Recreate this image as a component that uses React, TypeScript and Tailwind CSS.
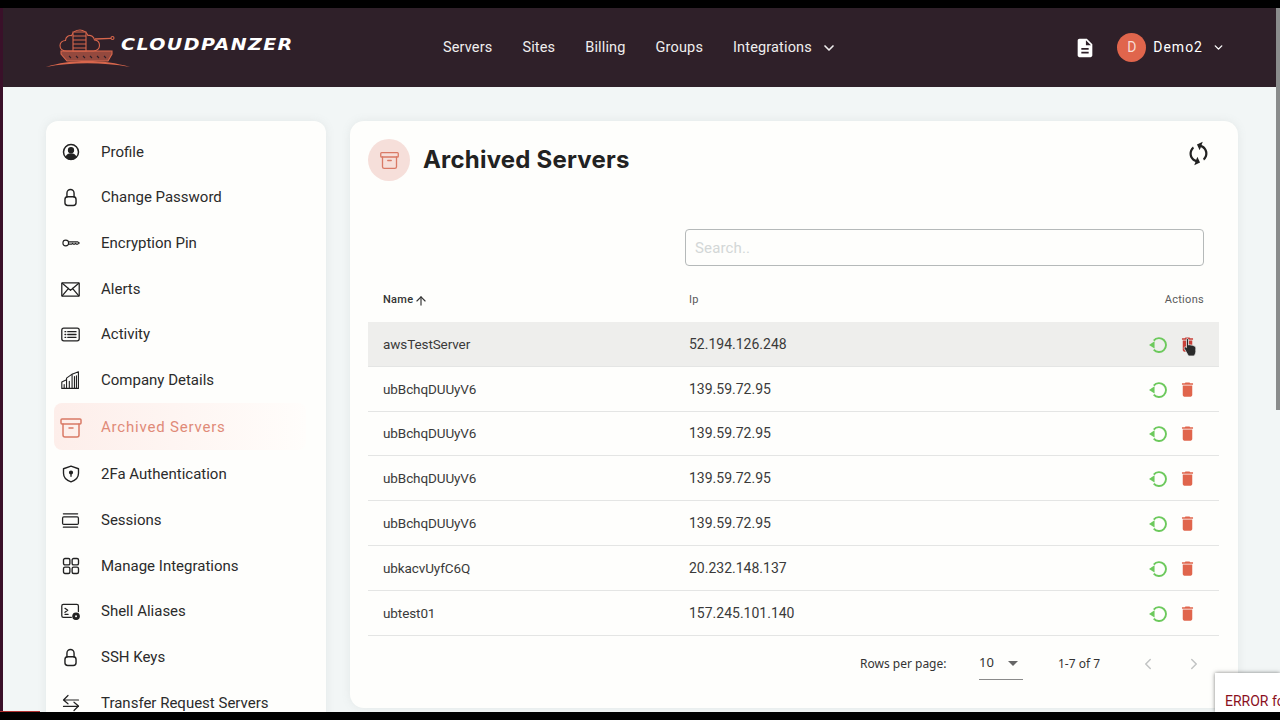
import React from "react";
import { Archive, ArrowUp, ChevronDown, ChevronLeft, ChevronRight } from "lucide-react";
import { MdDescription, MdSync } from "react-icons/md";

type IconProps = { className?: string };

const svgBase = {
  viewBox: "0 0 24 24",
  fill: "none",
  stroke: "currentColor",
  strokeWidth: 1.6,
  strokeLinecap: "round" as const,
  strokeLinejoin: "round" as const,
};

const ProfileIcon = ({ className }: IconProps) => (
  <svg {...svgBase} strokeWidth={2} className={className}>
    <circle cx="12" cy="12" r="10" />
    <circle cx="12" cy="9.5" r="3.2" fill="currentColor" />
    <path d="M5.5 18.500c1.500-3 4-4 6.500-4s5 1 6.500 4c-1.800 2-4 3-6.500 3s-4.700-1-6.500-3z" fill="currentColor" />
  </svg>
);

const LockIcon = ({ className }: IconProps) => (
  <svg {...svgBase} strokeWidth={1.800} className={className}>
    <path d="M7.500 11.500V6.500a4.500 4.500 0 0 1 9 0v5" />
    <rect x="5" y="11" width="14" height="11" rx="3.500" />
  </svg>
);

const KeyIcon = ({ className }: IconProps) => (
  <svg {...svgBase} strokeWidth={1.500} className={className}>
    <circle cx="5" cy="12" r="3.800" />
    <path d="M8.800 10.500H21l2 1.500-2 1.500h-2l-1-1-1 1h-2l-1-1-1 1H8.800" />
  </svg>
);

const MailIcon = ({ className }: IconProps) => (
  <svg {...svgBase} className={className}>
    <rect x="1" y="3.500" width="22" height="17" rx="1" />
    <path d="M1.500 4l10.500 9L22.500 4M1.500 20l8-9.500M22.500 20l-8-9.500" />
  </svg>
);

const ActivityIcon = ({ className }: IconProps) => (
  <svg {...svgBase} className={className}>
    <rect x="1" y="4" width="22" height="16" rx="2.500" />
    <path d="M5 8.500h1M8.500 8.500H19M5 12h1M8.500 12H19M5 15.500h1M8.500 15.500H19" />
  </svg>
);

const CompanyIcon = ({ className }: IconProps) => (
  <svg {...svgBase} strokeWidth={1.400} className={className}>
    <path d="M1 22v-8l6-3v11M7 22V9l7-5v18M14 22V4l8-3v21zM1 22h21M4 22v-5M10.500 22v-9M17 22V7M19.500 22V6" />
  </svg>
);

const ShieldIcon = ({ className }: IconProps) => (
  <svg {...svgBase} strokeWidth={1.800} className={className}>
    <path d="M12 1.500l10 3.500v6c0 5.500-4 9.500-10 11.500C6 20.500 2 16.500 2 11V5z" />
    <circle cx="12" cy="10" r="1.900" fill="currentColor" />
    <path d="M12 10.500v4.500" />
  </svg>
);

const SessionsIcon = ({ className }: IconProps) => (
  <svg {...svgBase} className={className}>
    <path d="M3 3.500h18M3 20.500h18" />
    <rect x="2" y="7.500" width="20" height="9.500" rx="1.500" />
  </svg>
);

const GridIcon = ({ className }: IconProps) => (
  <svg {...svgBase} strokeWidth={1.800} className={className}>
    <rect x="2" y="2" width="8.500" height="8.500" rx="2" />
    <rect x="13.500" y="2" width="8.500" height="8.500" rx="2" />
    <rect x="2" y="13.500" width="8.500" height="8.500" rx="2" />
    <rect x="13.500" y="13.500" width="8.500" height="8.500" rx="2" />
  </svg>
);

const ShellIcon = ({ className }: IconProps) => (
  <svg {...svgBase} className={className}>
    <path d="M13 19.500H3a2 2 0 0 1-2-2V5a2 2 0 0 1 2-2h17a2 2 0 0 1 2 2v7" />
    <path d="M5 8l3.500 2.500L5 13M5 15.500h4" />
    <circle cx="19" cy="18" r="4" fill="currentColor" />
    <circle cx="19" cy="18" r="1.200" fill="#fff" stroke="none" />
  </svg>
);

const TransferIcon = ({ className }: IconProps) => (
  <svg {...svgBase} className={className}>
    <path d="M8 2L2 8l6 5M2 8h20M16 11l6 5-6 6M22 16.500H2" />
  </svg>
);

const TrashIcon = ({ className }: IconProps) => (
  <svg viewBox="0 0 24 24" fill="currentColor" className={className}>
    <path d="M6 19c0 1.100.9 2 2 2h8c1.100 0 2-.9 2-2V7H6v12zM19 4h-3.500l-1-1h-5l-1 1H5v2h14V4z" />
  </svg>
);

const RestoreIcon = ({ className }: IconProps) => (
  <svg viewBox="0 0 24 24" fill="none" stroke="currentColor" strokeWidth={2.400} className={className}>
    <path d="M6 7A8.800 8.800 0 1 1 6 18.500" />
    <path d="M0 12.500L7 8v9z" fill="currentColor" stroke="none" />
  </svg>
);

const TankLogo = () => (
  <svg viewBox="0 0 90 40" fill="none" stroke="#d8664c" strokeWidth="1.100" className="w-[90px] h-[40px] shrink-0">
    <path d="M22 23c-4 0-7-2-7-5.500 0-3 2.500-5 5.500-5 .2-3.500 3-5.500 6-4.800C28 4 31.500 2 35 2s7 2.500 8 5.500c3-.6 6 1.200 6.500 4.500 3 .2 5 2.500 5 5.500s-2.500 5.500-6 5.500z" />
    <path d="M28 4h13v19H28zM28 8h13M28 12h13M28 16h13M28 20h13" fill="#2f2029" />
    <path d="M50 11l16-.7" strokeWidth="1.300" />
    <circle cx="67.500" cy="10" r="1.500" />
    <path d="M16 23h51v3l-4 7H22l-6-7z" fill="#d8664c" fillOpacity="0.6" />
    <path d="M24 28l2 2M31 28l2 2M38 28l2 2M45 28l2 2M52 28l2 2M59 28l2 2" stroke="#2f2029" />
    <path d="M1 39c24-8 58-8 84 0-28-5-58-5-84 0z" fill="#d8664c" stroke="none" />
  </svg>
);

const navLinks = ["Servers", "Sites", "Billing", "Groups"];

const sideItems = [
  { label: "Profile", icon: ProfileIcon, h: "h-[46px]", size: "w-[18px] h-[18px]" },
  { label: "Change Password", icon: LockIcon, h: "h-[45px]", size: "w-[19px] h-[19px]" },
  { label: "Encryption Pin", icon: KeyIcon, h: "h-[46px]", size: "w-[18px] h-[18px]" },
  { label: "Alerts", icon: MailIcon, h: "h-[46px]", size: "w-[19px] h-[19px]" },
  { label: "Activity", icon: ActivityIcon, h: "h-[45px]", size: "w-[19px] h-[19px]" },
  { label: "Company Details", icon: CompanyIcon, h: "h-[46px]", size: "w-[19px] h-[19px]" },
  { label: "Archived Servers", icon: Archive, h: "h-[47px] pt-[2px]", size: "w-[24px] h-[24px]", active: true },
  { label: "2Fa Authentication", icon: ShieldIcon, h: "h-[48px]", size: "w-[18px] h-[18px]" },
  { label: "Sessions", icon: SessionsIcon, h: "h-[45px]", size: "w-[19px] h-[19px]" },
  { label: "Manage Integrations", icon: GridIcon, h: "h-[46px]", size: "w-[18px] h-[18px]" },
  { label: "Shell Aliases", icon: ShellIcon, h: "h-[45px]", size: "w-[19px] h-[19px]" },
  { label: "SSH Keys", icon: LockIcon, h: "h-[46px]", size: "w-[19px] h-[19px]" },
  { label: "Transfer Request Servers", icon: TransferIcon, h: "h-[46px]", size: "w-[18px] h-[18px]" },
];

const servers = [
  { name: "awsTestServer", ip: "52.194.126.248" },
  { name: "ubBchqDUUyV6", ip: "139.59.72.95" },
  { name: "ubBchqDUUyV6", ip: "139.59.72.95" },
  { name: "ubBchqDUUyV6", ip: "139.59.72.95" },
  { name: "ubBchqDUUyV6", ip: "139.59.72.95" },
  { name: "ubkacvUyfC6Q", ip: "20.232.148.137" },
  { name: "ubtest01", ip: "157.245.101.140" },
];

const App: React.FC = () => {
  return (
    <div className="relative w-[1280px] h-[720px] overflow-hidden bg-black py-2 font-['Roboto',sans-serif]">
      <div className="h-[704px] flex overflow-hidden">
        <div className="w-[3px] bg-[#3a1029] shrink-0" />
        <div className="flex-1 flex flex-col min-w-0 bg-[#f2f6f6]">
          <header className="h-[79px] shrink-0 bg-[#2f2029] flex items-center text-white pl-[42px] pr-[51px]">
            <div className="flex items-center w-[398px] shrink-0">
              <TankLogo />
              <span className="ml-[-14px] mt-[-5px] origin-left scale-x-[1.27] text-[15px] font-bold italic tracking-[1.1px] font-['DejaVu_Sans',sans-serif]">CLOUDPANZER</span>
            </div>
            <nav className="flex items-center gap-[30px] text-[14.500px] tracking-[0.15px] text-[#f0eeee]">
              {navLinks.map((l) => (
                <span key={l}>{l}</span>
              ))}
              <span className="flex items-center gap-[9px]">
                Integrations
                <ChevronDown className="w-[16px] h-[16px]" strokeWidth={2.500} />
              </span>
            </nav>
            <div className="ml-auto flex items-center">
              <MdDescription className="w-[22px] h-[22px] mr-[21px]" />
              <div className="w-[29px] h-[29px] rounded-full bg-[#e0654c] flex items-center justify-center text-[14px] text-[#f8dcd4] mr-[7px]">D</div>
              <span className="text-[14px] tracking-[1px] mr-[9px]">Demo2</span>
              <ChevronDown className="w-[13px] h-[13px]" strokeWidth={2.500} />
            </div>
          </header>

          <div className="flex-1 flex gap-[24px] pl-[43px] pt-[34px] min-h-0">
            <aside className="w-[280px] h-[640px] shrink-0 bg-[#fefefc] rounded-t-[12px] shadow-[0_0_10px_rgba(120,130,130,0.12)] px-[8px] pt-[8px] text-[#2b2b2b] text-[15px]">
              {sideItems.map((item) => {
                const Icon = item.icon;
                return (
                  <div
                    key={item.label}
                    className={`${item.h} w-[252px] flex items-center rounded-[8px] ${item.active ? "bg-gradient-to-r from-[#fdeeea] to-[#fffdfb] text-[#e08a78]" : ""}`}
                  >
                    <div className="w-[19px] ml-[7px] shrink-0 flex justify-center">
                      <Icon className={`${item.size} shrink-0 ${item.active ? "text-[#d97a66]" : "text-[#222222]"}`} strokeWidth={item.active ? 1.500 : undefined} />
                    </div>
                    <span className={`ml-[21px] whitespace-nowrap ${item.active ? "tracking-[0.8px]" : "tracking-[0px]"}`}>{item.label}</span>
                  </div>
                );
              })}
            </aside>

            <main className="w-[888px] h-[587px] shrink-0 bg-[#fefefc] rounded-[14px] shadow-[0_0_10px_rgba(120,130,130,0.12)] px-[18px]">
              <div className="h-[108px] flex items-start justify-between pt-[18px]">
                <div className="flex items-center gap-[13px]">
                  <div className="w-[42px] h-[42px] rounded-full bg-[#f6dfda] flex items-center justify-center">
                    <Archive className="w-[21px] h-[21px] text-[#d97a66]" strokeWidth={1.500} />
                  </div>
                  <h1 className="text-[24px] font-bold tracking-[0.2px] text-[#222222] font-['Inter',sans-serif]">Archived Servers</h1>
                </div>
                <MdSync className="w-[27px] h-[27px] mr-[8px] mt-[1px] text-[#222222] rotate-[20deg]" />
              </div>

              <div className="flex justify-end pr-[16px]">
                <div className="w-[519px] h-[37px] border border-[#b5b9b9] rounded-[4px] flex items-center pl-[9px] pt-[1px] text-[15px] tracking-[0.15px] text-[#d3d7d7]">
                  Search..
                </div>
              </div>

              <div className="w-[851px] mt-[14px]">
                <div className="h-[42px] pb-[1px] flex items-center text-[11px] tracking-[0.3px] text-[#5a5a5a]">
                  <div className="w-[321px] pl-[15px] flex items-center gap-[1px] font-medium text-[#333333]">
                    Name <ArrowUp className="w-[14px] h-[14px]" strokeWidth={2} />
                  </div>
                  <div className="flex-1">Ip</div>
                  <div className="pr-[15px]">Actions</div>
                </div>
                {servers.map((s, i) => (
                  <div
                    key={i}
                    className={`h-[44.800px] pt-[1px] flex items-center border-b border-[#e4e5e4] text-[14px] text-[#3a3a3a] ${i === 0 ? "bg-[#eeeeec]" : ""}`}
                  >
                    <div className="w-[321px] pl-[15px] pb-[1px] text-[13.500px] tracking-[-0.1px]">{s.name}</div>
                    <div className="flex-1">{s.ip}</div>
                    <div className="flex items-center gap-[10px] pr-[22px] relative">
                      <RestoreIcon className="w-[19px] h-[19px] text-[#6cc95c]" />
                      <TrashIcon className={`w-[19px] h-[19px] ${i === 0 ? "text-[#c9413a]" : "text-[#e0654c]"}`} />
                      {i === 0 && (
                        <svg viewBox="0 0 16 20" className="absolute left-[33px] top-[2px] w-[16px] h-[20px]">
                          <path d="M5 1.500c.9 0 1.500.6 1.500 1.500v5l1-.3 1.500.3 1.500.3 1.500.5c1.300.5 1.800 1.300 1.800 2.700v3c0 2-1 3.500-2 4.500H6.500L2.500 12c-.6-.8-.4-1.700.3-2 .6-.3 1.200 0 1.700.6V3c0-.9 0-1.500.5-1.500z" fill="#2a2a2a" stroke="#e8e8e8" strokeWidth="0.800" />
                        </svg>
                      )}
                    </div>
                  </div>
                ))}
                <div className="h-[56px] flex items-center text-[12px] text-[#333333] font-['Noto_Sans',sans-serif]">
                  <span className="ml-[492px] w-[119px]">Rows per page:</span>
                  <div className="w-[44px] h-[32px] border-b border-[#8a8a8a] flex items-center justify-between pr-[5px]">
                    <span className="text-[13px]">10</span>
                    <span className="w-0 h-0 border-x-[5px] border-x-transparent border-t-[5px] border-t-[#666666]" />
                  </div>
                  <span className="ml-[35px] w-[43px] whitespace-nowrap">1-7 of 7</span>
                  <ChevronLeft className="w-[18px] h-[18px] ml-[38px] text-[#c2c4c4]" />
                  <ChevronRight className="w-[18px] h-[18px] ml-[28px] text-[#c2c4c4]" />
                </div>
              </div>
            </main>
          </div>
        </div>
        <div className="w-[4px] shrink-0 bg-[#f2f6f6]">
          <div className="h-[402px] bg-[#8a8c8c]" />
        </div>
      </div>

      <div className="absolute left-0 bottom-[8px] w-[40px] h-[1px] bg-[#b03030]" />
      <div className="absolute left-[1215px] top-[673px] w-[65px] h-[39px] bg-white shadow-[0_0_4px_rgba(0,0,0,0.5)] overflow-hidden pl-[10px] pt-[20px] text-[14px] leading-[17px] whitespace-nowrap text-[#8b0f1e]">
        ERROR for
      </div>
    </div>
  );
};

export default App;
